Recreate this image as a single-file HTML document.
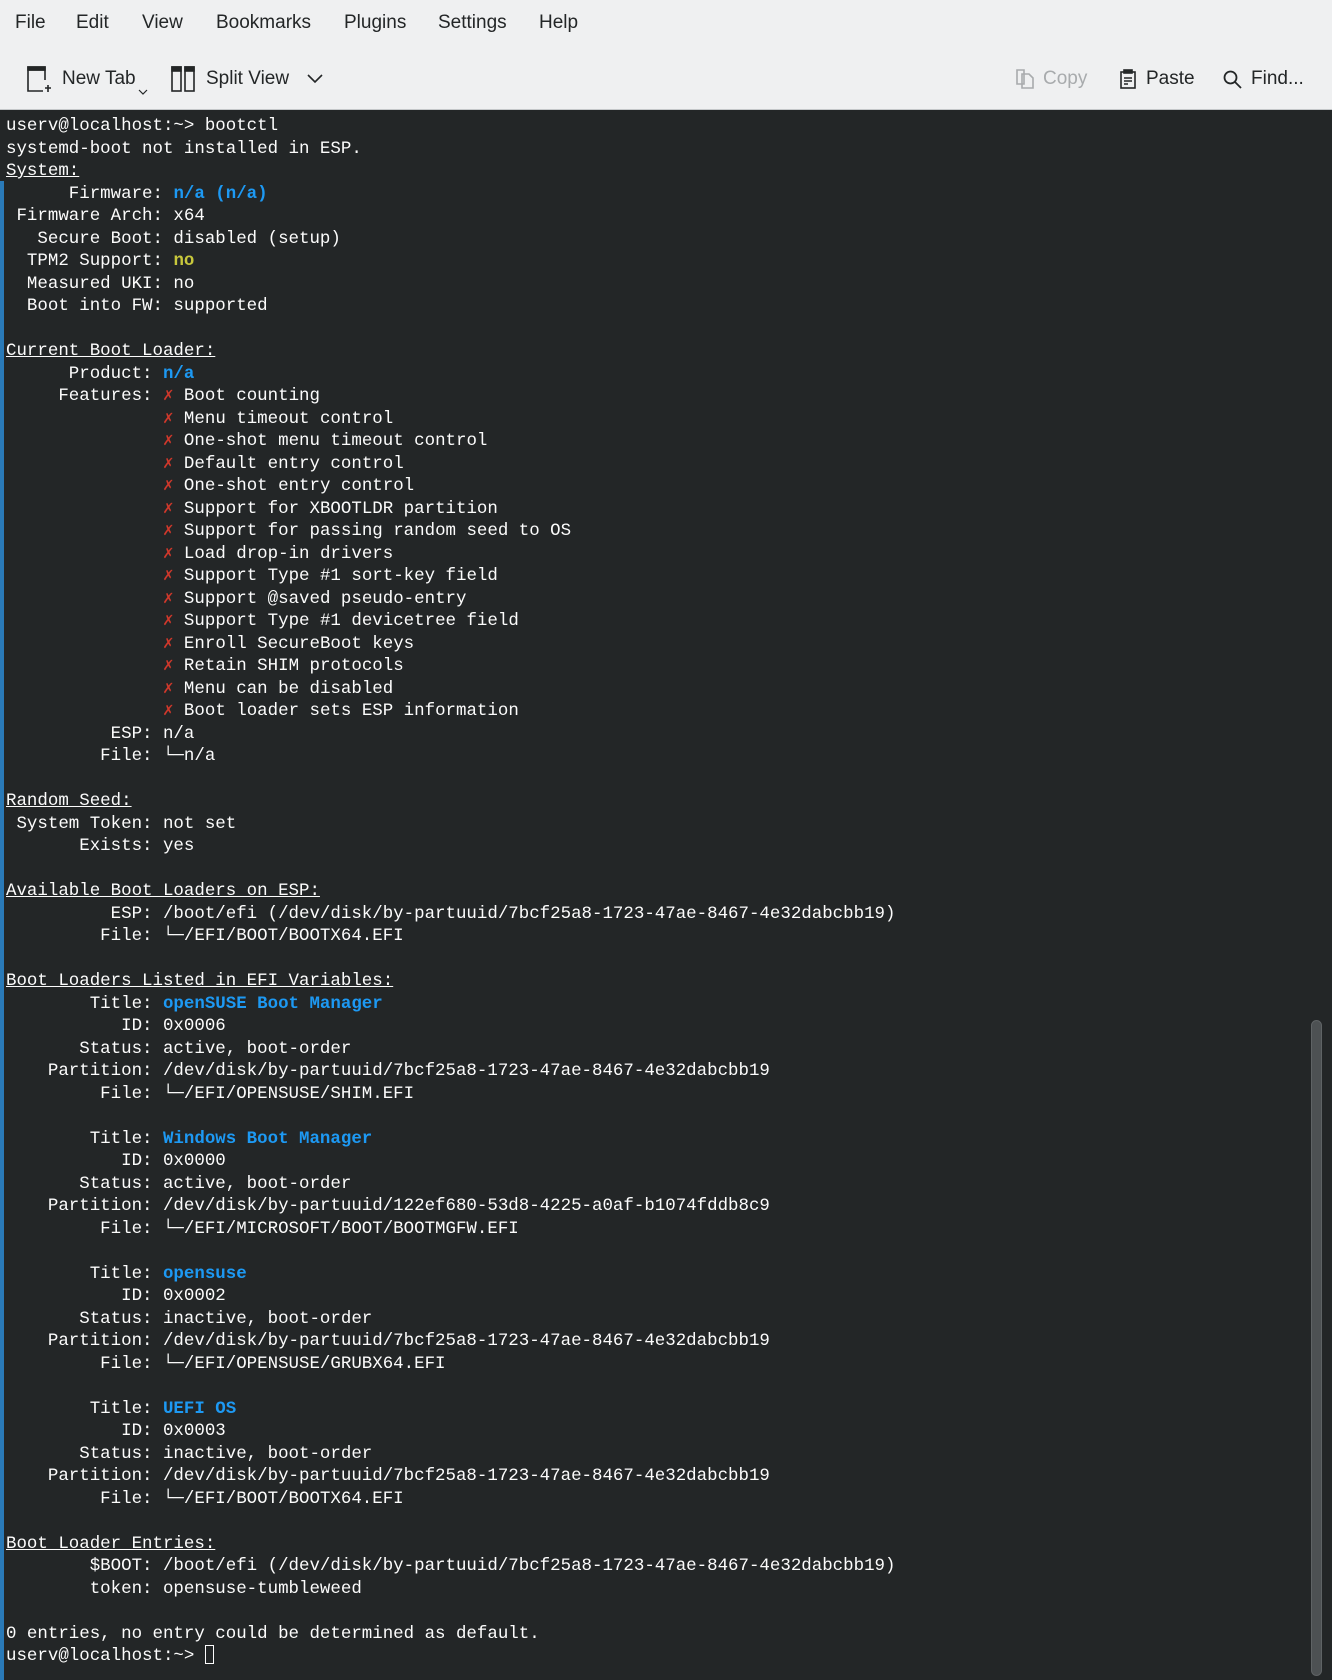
<!DOCTYPE html>
<html><head><meta charset="utf-8"><style>
html,body{margin:0;padding:0}
body{width:1332px;height:1680px;overflow:hidden;background:#232627;position:relative;font-family:"Liberation Sans","DejaVu Sans",sans-serif}
#top{position:absolute;left:0;top:0;width:1332px;height:109px;background:#eff0f1;border-bottom:1px solid #c4c7c9}
.m{position:absolute;top:12px;font-size:19px;color:#232627}
.t{position:absolute;top:68px;font-size:19px;color:#232627}
#term{position:absolute;left:0;top:110px;width:1332px;height:1570px;background:#232627}
#bar{position:absolute;left:0;top:181px;width:4px;height:1499px;background:#2a7ab8}
pre{position:absolute;left:6px;top:115px;margin:0;font-family:"Liberation Mono","DejaVu Sans Mono",monospace;font-size:17.45px;line-height:22.5px;color:#fcfcfc}
u{text-decoration:underline}
.b{color:#1d99f3;font-weight:bold}
.y{color:#c8c83c;font-weight:bold}
.r{color:#d0382b}
#sb{position:absolute;left:1311px;top:1020px;width:11px;height:656px;border-radius:6px;background:#4d5153;border:1px solid #5f6365;box-sizing:border-box}
.cur{display:inline-block;width:9px;height:19px;border:1.5px solid #fcfcfc;vertical-align:-4px;box-sizing:border-box}
</style></head><body>
<div id="top">
<span class="m" style="left:15px">File</span>
<span class="m" style="left:76px">Edit</span>
<span class="m" style="left:142px">View</span>
<span class="m" style="left:216px">Bookmarks</span>
<span class="m" style="left:344px">Plugins</span>
<span class="m" style="left:438px">Settings</span>
<span class="m" style="left:539px">Help</span>
<svg style="position:absolute;left:27px;top:66px" width="26" height="26" viewBox="0 0 26 26" fill="none" stroke="#232627" stroke-width="1.6"><path d="M1 1h17v3H1zM1 4v21h15M18 4v10M21 19v7M18 22h6"/><rect x="1" y="1" width="17" height="3" fill="#232627"/></svg>
<span class="t" style="left:62px">New Tab</span>
<svg style="position:absolute;left:138px;top:88px" width="10" height="8" viewBox="0 0 10 8"><path d="M1 2l4 4 4-4" stroke="#232627" fill="none" stroke-width="1.2"/></svg>
<svg style="position:absolute;left:171px;top:66px" width="24" height="26" viewBox="0 0 24 26" fill="none" stroke="#232627" stroke-width="1.6"><rect x="1" y="1" width="9" height="24"/><rect x="14" y="1" width="9" height="24"/><rect x="1" y="1" width="9" height="4" fill="#232627"/><rect x="14" y="1" width="9" height="4" fill="#232627"/></svg>
<span class="t" style="left:206px">Split View</span>
<svg style="position:absolute;left:307px;top:74px" width="16" height="10" viewBox="0 0 16 10"><path d="M1 1l7 7 7-7" stroke="#232627" fill="none" stroke-width="1.6"/></svg>
<svg style="position:absolute;left:1016px;top:69px" width="19" height="20" viewBox="0 0 19 20" fill="none" stroke="#a8abad" stroke-width="1.6"><path d="M1 1h7v14H1zM6 5h7l4 4v10H6z"/></svg>
<span class="t" style="left:1043px;color:#a8abad">Copy</span>
<svg style="position:absolute;left:1120px;top:69px" width="16" height="20" viewBox="0 0 16 20" fill="none" stroke="#232627" stroke-width="1.6"><rect x="1" y="3" width="14" height="16"/><rect x="4" y="1" width="8" height="3" fill="#232627"/><path d="M4 9h8M4 12h8M4 15h4"/></svg>
<span class="t" style="left:1146px">Paste</span>
<svg style="position:absolute;left:1223px;top:70px" width="19" height="19" viewBox="0 0 19 19" fill="none" stroke="#232627" stroke-width="1.8"><circle cx="7.5" cy="7.5" r="6"/><path d="M12 12l6 6"/></svg>
<span class="t" style="left:1251px">Find...</span>
</div>
<div id="term"></div>
<div id="bar"></div>
<div id="sb"></div>
<pre>userv@localhost:~&gt; bootctl
systemd-boot not installed in ESP.
<u>System:</u>
      Firmware: <span class="b">n/a (n/a)</span>
 Firmware Arch: x64
   Secure Boot: disabled (setup)
  TPM2 Support: <span class="y">no</span>
  Measured UKI: no
  Boot into FW: supported

<u>Current Boot Loader:</u>
      Product: <span class="b">n/a</span>
     Features: <span class="r">✗</span> Boot counting
               <span class="r">✗</span> Menu timeout control
               <span class="r">✗</span> One-shot menu timeout control
               <span class="r">✗</span> Default entry control
               <span class="r">✗</span> One-shot entry control
               <span class="r">✗</span> Support for XBOOTLDR partition
               <span class="r">✗</span> Support for passing random seed to OS
               <span class="r">✗</span> Load drop-in drivers
               <span class="r">✗</span> Support Type #1 sort-key field
               <span class="r">✗</span> Support @saved pseudo-entry
               <span class="r">✗</span> Support Type #1 devicetree field
               <span class="r">✗</span> Enroll SecureBoot keys
               <span class="r">✗</span> Retain SHIM protocols
               <span class="r">✗</span> Menu can be disabled
               <span class="r">✗</span> Boot loader sets ESP information
          ESP: n/a
         File: └─n/a

<u>Random Seed:</u>
 System Token: not set
       Exists: yes

<u>Available Boot Loaders on ESP:</u>
          ESP: /boot/efi (/dev/disk/by-partuuid/7bcf25a8-1723-47ae-8467-4e32dabcbb19)
         File: └─/EFI/BOOT/BOOTX64.EFI

<u>Boot Loaders Listed in EFI Variables:</u>
        Title: <span class="b">openSUSE Boot Manager</span>
           ID: 0x0006
       Status: active, boot-order
    Partition: /dev/disk/by-partuuid/7bcf25a8-1723-47ae-8467-4e32dabcbb19
         File: └─/EFI/OPENSUSE/SHIM.EFI

        Title: <span class="b">Windows Boot Manager</span>
           ID: 0x0000
       Status: active, boot-order
    Partition: /dev/disk/by-partuuid/122ef680-53d8-4225-a0af-b1074fddb8c9
         File: └─/EFI/MICROSOFT/BOOT/BOOTMGFW.EFI

        Title: <span class="b">opensuse</span>
           ID: 0x0002
       Status: inactive, boot-order
    Partition: /dev/disk/by-partuuid/7bcf25a8-1723-47ae-8467-4e32dabcbb19
         File: └─/EFI/OPENSUSE/GRUBX64.EFI

        Title: <span class="b">UEFI OS</span>
           ID: 0x0003
       Status: inactive, boot-order
    Partition: /dev/disk/by-partuuid/7bcf25a8-1723-47ae-8467-4e32dabcbb19
         File: └─/EFI/BOOT/BOOTX64.EFI

<u>Boot Loader Entries:</u>
        $BOOT: /boot/efi (/dev/disk/by-partuuid/7bcf25a8-1723-47ae-8467-4e32dabcbb19)
        token: opensuse-tumbleweed

0 entries, no entry could be determined as default.
userv@localhost:~&gt; <span class="cur"></span></pre>
</body></html>
